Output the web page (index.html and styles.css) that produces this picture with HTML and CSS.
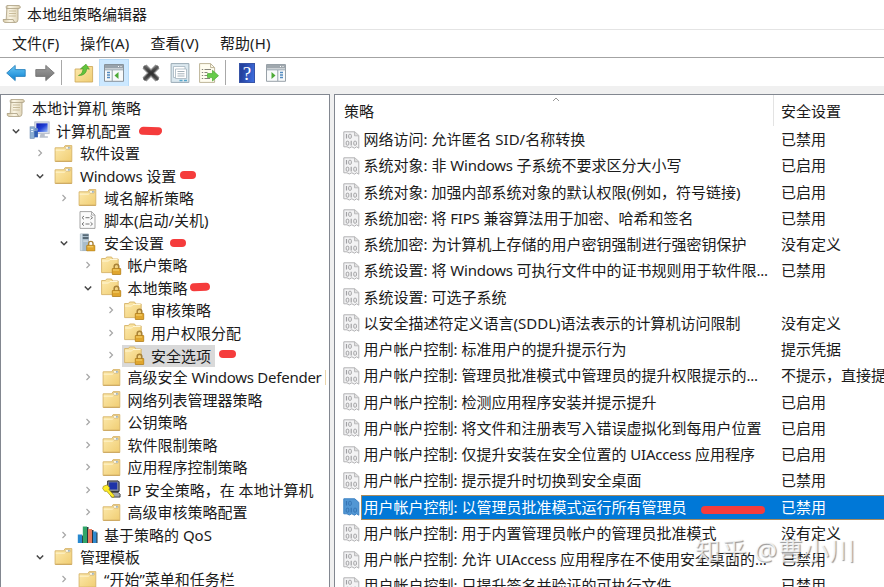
FILE: index.html
```html
<!DOCTYPE html>
<html lang="zh-CN">
<head>
  <meta charset="utf-8">
  <title>本地组策略编辑器</title>
  <link rel="stylesheet" href="styles.css">
</head>
<body>
  <svg class="defs" width="0" height="0">
    <defs>
      <linearGradient id="gold" x1="0" y1="0" x2="1" y2="1"><stop offset="0" stop-color="#fdeaae"/><stop offset="1" stop-color="#f0cd72"/></linearGradient>
      <linearGradient id="paper" x1="0" y1="0" x2="1" y2="0"><stop offset="0" stop-color="#d6c8a4"/><stop offset=".4" stop-color="#fbf6e6"/><stop offset="1" stop-color="#d9ccab"/></linearGradient>
      <linearGradient id="blue" x1="0" y1="0" x2="0" y2="1"><stop offset="0" stop-color="#69c9f7"/><stop offset="1" stop-color="#0b7fd0"/></linearGradient>
      <linearGradient id="gray" x1="0" y1="0" x2="0" y2="1"><stop offset="0" stop-color="#a0a0a0"/><stop offset="1" stop-color="#707070"/></linearGradient>
      <linearGradient id="dark" x1="0" y1="0" x2="0" y2="1"><stop offset="0" stop-color="#6e6e6e"/><stop offset=".5" stop-color="#2d2d2d"/><stop offset="1" stop-color="#5a5a5a"/></linearGradient>
      <linearGradient id="screen" x1="0" y1="0" x2="1" y2="1"><stop offset="0" stop-color="#0a18a4"/><stop offset=".5" stop-color="#1f3ed6"/><stop offset="1" stop-color="#9ebff9"/></linearGradient>
      <symbol id="chev-right" viewBox="0 0 10 10"><path d="M3.500 2l3 3-3 3" fill="none" stroke="#a6a6a6" stroke-width="1.200"/></symbol>
      <symbol id="chev-down" viewBox="0 0 10 10"><path d="M1.800 3.500L5 6.700l3.200-3.200" fill="none" stroke="#444" stroke-width="1.500"/></symbol>
      <symbol id="scroll" viewBox="0 0 20 20">
        <path d="M5 1.500h12q1.800.5 1.200 2.500l-2.200.6v11q0 2.800-2.500 2.900H3Q.7 18 1.200 15.500h3z" fill="url(#paper)" stroke="#b3a88c" stroke-width=".9"/>
        <path d="M1.200 15.500h10q.2 2.800 2.500 2.900M5 1.500q-1.500 1-.6 3h12" fill="none" stroke="#b3a88c" stroke-width=".9"/>
        <path d="M7 7h7M7 9.500h7M6.800 12h7" stroke="#c3b693" stroke-width=".9"/>
      </symbol>
      <symbol id="folder" viewBox="0 0 18 17">
        <path d="M.6 2.800h8.600l1.400-2.200h6.700v15.800H.6z" fill="url(#gold)" stroke="#d6b368" stroke-width=".9"/>
        <path d="M1.200 5.200h9l1.400-1.500" fill="none" stroke="#fff6d2" stroke-width=".9"/>
        <rect x="10.800" y="1.600" width="5" height="2.600" rx=".6" fill="#fffdf0" stroke="#c9a65c" stroke-width=".6"/><path d="M13.500 2.900h1.800" stroke="#7f9fb8" stroke-width="1.100"/>
        <path d="M1 16.300h16.300" stroke="#c5a05a" stroke-width=".8"/>
      </symbol>
      <symbol id="lock" viewBox="0 0 10 12">
        <path d="M2.700 6V3.600a2.300 2.300 0 0 1 4.600 0V6" fill="none" stroke="#a88238" stroke-width="1.500"/>
        <rect x=".6" y="5.500" width="8.800" height="6" rx=".5" fill="#e0a62e" stroke="#b07d1c" stroke-width=".8"/><path d="M1.500 7h6" stroke="#f8d775"/>
      </symbol>
      <symbol id="folder-lock" viewBox="0 0 21 19">
        <path d="M.6 2.500h4l1-1.500h5l1 2h5.600v13.600H.6z" fill="url(#gold)" stroke="#d6b368" stroke-width=".9"/>
        <path d="M1 5h6.500l1.500-1.500h7.500" fill="none" stroke="#fff6d5" stroke-width="1"/>
        <use href="#lock" x="10.500" y="7" width="10" height="12"/>
      </symbol>
      <symbol id="computer" viewBox="0 0 20 18">
        <rect x="5.500" y=".8" width="13.700" height="11.200" fill="#dadfe9" stroke="#b1b8c6" stroke-width=".8"/><rect x="7" y="2.200" width="10.700" height="8.200" fill="url(#screen)"/>
        <path d="M11 12h4v2.500h3V16H10z" fill="#b9c0cb"/>
        <rect x="1" y="5.500" width="4" height="11" fill="#8db0d4" stroke="#6e8bb0" stroke-width=".6"/><path d="M2 8h2M2 10h2" stroke="#eaf3ff"/><path d="M5 9.500h3.500v6H5z" fill="#315fb3"/><circle cx="7" cy="8" r="1.700" fill="#6c8ec9"/>
      </symbol>
      <symbol id="script" viewBox="0 0 17 18">
        <path d="M1 .6h11.500l3.500 3.500v13.300H1z" fill="#fbfbfb" stroke="#9b9b9b" stroke-width=".9"/><path d="M12.500.6v3.500H16" fill="none" stroke="#9b9b9b" stroke-width=".8"/>
        <path d="M5 5L3 6.700l2 1.700M11.500 5l2 1.700-2 1.700M6.500 6.700h4M5 11.300L3 13l2 1.700M11.500 11.300l2 1.700-2 1.700M6.500 13h4" fill="none" stroke="#666" stroke-width=".9"/>
      </symbol>
      <symbol id="server-lock" viewBox="0 0 18 20">
        <path d="M1.500 1H10v17.500H1.500z" fill="#a9bdcb" stroke="#8fa2b0" stroke-width=".7"/><path d="M1.500 1h2v17.500h-2z" fill="#d0dde7"/><path d="M4 2.300h6M4 5.300h6" stroke="#3d4d59" stroke-width="1.400"/><path d="M4.500 8.500h5" stroke="#e2ebf1"/>
        <use href="#lock" x="7.500" y="7.500" width="10" height="12"/>
      </symbol>
      <symbol id="ipsec" viewBox="0 0 20 20">
        <path d="M6 1h11l1 1v10H6z" fill="#8b91a0" stroke="#222" stroke-width="1"/><rect x="7.500" y="2.500" width="8.500" height="7.500" fill="#1d32a8"/>
        <path d="M8 13h9l2 2v3H10z" fill="#a4a7b0" stroke="#333" stroke-width=".9"/>
        <path d="M1.500 6.500l4-1.300 2.500 3-.6 2 5.400 6-.2 2-2.200-.2-5.500-6.200-2 .2-2.200-3z" fill="#ffed28" stroke="#988916" stroke-width=".7"/>
      </symbol>
      <symbol id="qos" viewBox="0 0 21 19">
        <path d="M4.500 10.500h2V18h-2zM9.500 2h2v16h-2zM14.500 5h2v13h-2zM19 7.500h1.500V18H19z" fill="#29343c"/>
        <path d="M.8 9.500h4.200V18H.8z" fill="#2788cf"/><path d="M5.800 1.500H10V18H5.800z" fill="#31a568"/><path d="M11 4h4v14h-4z" fill="#e57b60"/><path d="M16 6.500h3.500V18H16z" fill="#2f89cf"/>
      </symbol>
      <symbol id="binary" viewBox="0 0 17 18">
        <path d="M.8.8h11l4 3.600v12.800l-2.300-1.400-2 1.400-2.700-1.400-2.500 1.200-2.300-1.200H.8z" fill="#f3f3f4" stroke="#b2b2b4" stroke-width="1"/><path d="M11.500.8v4h4" fill="#ddd" stroke="#b2b2b4" stroke-width=".8"/>
        <path d="M3.500 3v4.500M8.200 9.800v4.800" stroke="#a0a0a3" stroke-width="1.200"/>
        <rect x="5.700" y="3.300" width="2.600" height="4" rx="1" fill="none" stroke="#a0a0a3"/><rect x="3.200" y="10.200" width="2.600" height="4" rx="1" fill="none" stroke="#a0a0a3"/><rect x="10.800" y="10.200" width="2.600" height="4" rx="1" fill="none" stroke="#a0a0a3"/>
      </symbol>
      <symbol id="binary-blue" viewBox="0 0 17 18">
        <path d="M.8.8h11l4 3.600v12.800l-2.300-1.400-2 1.400-2.700-1.400-2.500 1.200-2.300-1.200H.8z" fill="#5297d4" stroke="#3d82c4"/>
        <path d="M3.500 3v4.500M8.200 9.800v4.800" stroke="#3574b4" stroke-width="1.200"/>
        <rect x="5.700" y="3.300" width="2.600" height="4" rx="1" fill="none" stroke="#3574b4"/><rect x="3.200" y="10.200" width="2.600" height="4" rx="1" fill="none" stroke="#3574b4"/><rect x="10.800" y="10.200" width="2.600" height="4" rx="1" fill="none" stroke="#3574b4"/>
      </symbol>
    </defs>
  </svg>

  <div class="window">
    <header class="titlebar"><svg class="i-scroll"><use href="#scroll"/></svg><span>本地组策略编辑器</span></header>
    <nav class="menubar"><span>文件(F)</span><span>操作(A)</span><span>查看(V)</span><span>帮助(H)</span></nav>
    <div class="toolbar">
      <svg class="tool back" viewBox="0 0 20 18"><path d="M.7 9l8.500-7.600v4.200h10v6.800h-10v4.200z" fill="url(#blue)" stroke="#2a82bd" stroke-width=".9"/></svg>
      <svg class="tool forward" viewBox="0 0 20 18"><path d="M19.300 9l-8.500-7.600v4.200h-10v6.800h10v4.200z" fill="url(#gray)" stroke="#747474" stroke-width=".9"/></svg>
      <i class="sep"></i>
      <svg class="tool up" viewBox="0 0 19 20"><path d="M.6 6h7l1-2.500h9.500V19H.6z" fill="url(#gold)" stroke="#cfac5d" stroke-width=".9"/><path d="M4 12.500q4.500-1.500 4.500-7L6 5.800l5.500-4.600 3.300 5-2.600-.5q-.4 6.800-8.200 6.800z" fill="#62c43c" stroke="#4a9f2c" stroke-width=".7"/></svg>
      <span class="pressed"><svg class="tool" viewBox="0 0 20 18"><path d="M.5.5h19v16.800H.5z" fill="#f8fafb" stroke="#87929b"/><path d="M1 1h18v3.500H1z" fill="#98a2ab"/><path d="M14 2.500h1M16.500 2.500h1" stroke="#fff"/><path d="M1 5.800h18M8.200 6v11" stroke="#93a0aa"/><path d="M3 8.500h3M3 11h3M3 13.500h3" stroke="#538ac0" stroke-width="1.400"/><path d="M14.500 8v7L10.500 11.500z" fill="#4daa37"/></svg></span>
      <svg class="tool delete" viewBox="0 0 20 20"><path d="M3.500 3.500l13 13M16.500 3.500l-13 13" fill="none" stroke="#8b8b8b" stroke-width="5.600"/><path d="M1.900 3.900L4 1.900l6 5.800 6-5.800 2.100 2L12.300 10l5.800 6.100-2.100 2-6-5.800-6 5.800-2.100-2L7.700 10z" fill="url(#dark)"/></svg>
      <svg class="tool props" viewBox="0 0 19 20"><path d="M.6.6h17.800v18.800H.6z" fill="#dbe8ef" stroke="#9aabb6"/><path d="M3 3.500h11.500v11H3z" fill="#fff" stroke="#a4b4be" stroke-width=".8"/><path d="M5 6h11v9.500H5z" fill="#fff" stroke="#a4b4be" stroke-width=".8"/><path d="M7 8.500h7M7 10.800h7M7 13h7" stroke="#a4b1b9"/><path d="M9 17.500h3M13.500 17.500h3" stroke="#57a6cb" stroke-width="1.500"/></svg>
      <svg class="tool export" viewBox="0 0 20 20"><path d="M.6.600h11l4 4v14.800H.6z" fill="#fffdf0" stroke="#bdb498"/><path d="M11.600.6v4h4" fill="none" stroke="#bdb498"/><path d="M2.800 6.500h1.400M5.500 6.500h6.500M2.800 9.500h1.400M5.500 9.500h3M2.800 12.500h1.400M5.500 12.500h3M2.800 15.500h1.400M5.500 15.500h5.500" stroke="#86857b"/><path d="M8.500 10.600h5V7.300l6 5.400-6 5.300v-3.400h-5z" fill="#66cc4a" stroke="#4aa834" stroke-width=".7"/></svg>
      <i class="sep second"></i>
      <span class="help">?</span>
      <svg class="tool action" viewBox="0 0 20 18"><path d="M.5.5h19v16.800H.5z" fill="#f8fafb" stroke="#98a1a8"/><path d="M1 1h18v3.500H1z" fill="#a0a8ae"/><path d="M14 2.500h1M16.500 2.500h1" stroke="#fff"/><path d="M1 5.800h18M11.800 6v11" stroke="#93a0aa"/><path d="M14 8.500h3M14 11h3M14 13.500h3" stroke="#538ac0" stroke-width="1.400"/><path d="M5.500 8v7l4-3.500z" fill="#4daa37"/></svg>
    </div>

    <main class="panes">
      <section class="tree">
        <div class="node root"><svg class="i-scroll"><use href="#scroll"/></svg><span class="label">本地计算机 策略</span></div>
        <div class="node l1"><svg class="chev"><use href="#chev-down"/></svg><svg class="icon"><use href="#computer"/></svg><span class="label">计算机配置</span><i class="mark m1"></i></div>
        <div class="node l2"><svg class="chev"><use href="#chev-right"/></svg><svg class="icon folder"><use href="#folder"/></svg><span class="label">软件设置</span></div>
        <div class="node l2"><svg class="chev"><use href="#chev-down"/></svg><svg class="icon folder"><use href="#folder"/></svg><span class="label"><span class="en">Windows</span> 设置</span><i class="mark m2"></i></div>
        <div class="node l3"><svg class="chev"><use href="#chev-right"/></svg><svg class="icon folder"><use href="#folder"/></svg><span class="label">域名解析策略</span></div>
        <div class="node l3"><i class="chev"></i><svg class="icon script"><use href="#script"/></svg><span class="label">脚本(启动/关机)</span></div>
        <div class="node l3"><svg class="chev"><use href="#chev-down"/></svg><svg class="icon"><use href="#server-lock"/></svg><span class="label">安全设置</span><i class="mark m3"></i></div>
        <div class="node l4"><svg class="chev"><use href="#chev-right"/></svg><svg class="icon"><use href="#folder-lock"/></svg><span class="label">帐户策略</span></div>
        <div class="node l4"><svg class="chev"><use href="#chev-down"/></svg><svg class="icon"><use href="#folder-lock"/></svg><span class="label">本地策略</span><i class="mark m4"></i></div>
        <div class="node l5"><svg class="chev"><use href="#chev-right"/></svg><svg class="icon"><use href="#folder-lock"/></svg><span class="label">审核策略</span></div>
        <div class="node l5"><svg class="chev"><use href="#chev-right"/></svg><svg class="icon"><use href="#folder-lock"/></svg><span class="label">用户权限分配</span></div>
        <div class="node l5"><svg class="chev"><use href="#chev-right"/></svg><span class="current"><svg class="icon"><use href="#folder-lock"/></svg><span class="label">安全选项</span></span><i class="mark m5"></i></div>
        <div class="node l4"><svg class="chev"><use href="#chev-right"/></svg><svg class="icon folder"><use href="#folder"/></svg><span class="label">高级安全 <span class="en">Windows Defender</span></span><i class="cut"></i></div>
        <div class="node l4"><i class="chev"></i><svg class="icon folder"><use href="#folder"/></svg><span class="label">网络列表管理器策略</span></div>
        <div class="node l4"><svg class="chev"><use href="#chev-right"/></svg><svg class="icon folder"><use href="#folder"/></svg><span class="label">公钥策略</span></div>
        <div class="node l4"><svg class="chev"><use href="#chev-right"/></svg><svg class="icon folder"><use href="#folder"/></svg><span class="label">软件限制策略</span></div>
        <div class="node l4"><svg class="chev"><use href="#chev-right"/></svg><svg class="icon folder"><use href="#folder"/></svg><span class="label">应用程序控制策略</span></div>
        <div class="node l4"><svg class="chev"><use href="#chev-right"/></svg><svg class="icon"><use href="#ipsec"/></svg><span class="label"><span class="en">IP </span>安全策略，在<span class="en"> </span>本地计算机</span></div>
        <div class="node l4"><svg class="chev"><use href="#chev-right"/></svg><svg class="icon folder"><use href="#folder"/></svg><span class="label">高级审核策略配置</span></div>
        <div class="node l3"><svg class="chev"><use href="#chev-right"/></svg><svg class="icon"><use href="#qos"/></svg><span class="label">基于策略的 QoS</span></div>
        <div class="node l2"><svg class="chev"><use href="#chev-down"/></svg><svg class="icon folder"><use href="#folder"/></svg><span class="label">管理模板</span></div>
        <div class="node l3"><svg class="chev"><use href="#chev-right"/></svg><svg class="icon folder"><use href="#folder"/></svg><span class="label">“开始”菜单和任务栏</span></div>
      </section>

      <section class="list">
        <div class="head"><span class="col-name">策略</span><svg class="sort" viewBox="0 0 8 5"><path d="M1 4l3-3 3 3" fill="none" stroke="#999"/></svg><span class="col-set">安全设置</span></div>
        <div class="row"><svg><use href="#binary"/></svg><div class="cells"><p>网络访问: 允许匿名 SID/名称转换</p><b>已禁用</b></div></div>
        <div class="row"><svg><use href="#binary"/></svg><div class="cells"><p>系统对象: 非 <span class="en">Windows</span> 子系统不要求区分大小写</p><b>已启用</b></div></div>
        <div class="row"><svg><use href="#binary"/></svg><div class="cells"><p>系统对象: 加强内部系统对象的默认权限(例如，符号链接)</p><b>已启用</b></div></div>
        <div class="row"><svg><use href="#binary"/></svg><div class="cells"><p>系统加密: 将 <span class="en">FIPS</span> 兼容算法用于加密、哈希和签名</p><b>已禁用</b></div></div>
        <div class="row"><svg><use href="#binary"/></svg><div class="cells"><p>系统加密: 为计算机上存储的用户密钥强制进行强密钥保护</p><b>没有定义</b></div></div>
        <div class="row"><svg><use href="#binary"/></svg><div class="cells"><p>系统设置: 将 <span class="en">Windows</span> 可执行文件中的证书规则用于软件限<span class="en">...</span></p><b>已禁用</b></div></div>
        <div class="row"><svg><use href="#binary"/></svg><div class="cells"><p>系统设置: 可选子系统</p><b></b></div></div>
        <div class="row"><svg><use href="#binary"/></svg><div class="cells"><p>以安全描述符定义语言(SDDL)语法表示的计算机访问限制</p><b>没有定义</b></div></div>
        <div class="row"><svg><use href="#binary"/></svg><div class="cells"><p>用户帐户控制: 标准用户的提升提示行为</p><b>提示凭据</b></div></div>
        <div class="row"><svg><use href="#binary"/></svg><div class="cells"><p>用户帐户控制: 管理员批准模式中管理员的提升权限提示的<span class="en">...</span></p><b>不提示，直接提</b></div></div>
        <div class="row"><svg><use href="#binary"/></svg><div class="cells"><p>用户帐户控制: 检测应用程序安装并提示提升</p><b>已启用</b></div></div>
        <div class="row"><svg><use href="#binary"/></svg><div class="cells"><p>用户帐户控制: 将文件和注册表写入错误虚拟化到每用户位置</p><b>已启用</b></div></div>
        <div class="row"><svg><use href="#binary"/></svg><div class="cells"><p>用户帐户控制: 仅提升安装在安全位置的 <span class="en">UIAccess</span> 应用程序</p><b>已启用</b></div></div>
        <div class="row"><svg><use href="#binary"/></svg><div class="cells"><p>用户帐户控制: 提示提升时切换到安全桌面</p><b>已禁用</b></div></div>
        <div class="row selected"><svg><use href="#binary-blue"/></svg><div class="cells"><p>用户帐户控制: 以管理员批准模式运行所有管理员<i class="mark m6"></i></p><b>已禁用</b></div></div>
        <div class="row"><svg><use href="#binary"/></svg><div class="cells"><p>用户帐户控制: 用于内置管理员帐户的管理员批准模式</p><b>没有定义</b></div></div>
        <div class="row"><svg><use href="#binary"/></svg><div class="cells"><p>用户帐户控制: 允许 <span class="en">UIAccess</span> 应用程序在不使用安全桌面的<span class="en">...</span></p><b>已禁用</b></div></div>
        <div class="row"><svg><use href="#binary"/></svg><div class="cells"><p>用户帐户控制: 只提升签名并验证的可执行文件</p><b>已禁用</b></div></div>
      </section>
    </main>
    <div class="watermark">知乎 @曹小川</div>
  </div>
</body>
</html>
```
FILE: styles.css
```css
* {
  box-sizing: border-box;
}

body {
  margin: 0;
  font-family: "Noto Sans", "Noto Sans CJK SC", sans-serif;
  font-size: 15px;
  line-height: 22px;
  color: #1b1b1b;
  background: #fff;
}

.defs {
  position: absolute;
}

.window {
  position: relative;
  display: flex;
  flex-direction: column;
  width: 884px;
  height: 587px;
  overflow: hidden;
}

svg {
  display: block;
  flex: none;
}

.en {
  letter-spacing: -.25px;
}

.i-scroll {
  width: 20px;
  height: 20px;
}

.titlebar {
  display: flex;
  align-items: center;
  gap: 5px;
  height: 30px;
  padding: 0 0 1px 2px;
  border-bottom: 1px solid #e4e4e4;
}

.menubar {
  display: flex;
  gap: 21px;
  height: 28px;
  padding: 2px 0 0 12px;
  border-bottom: 1px solid #a3a3a3;
}

.menubar span {
  letter-spacing: .1px;
}

.toolbar {
  display: flex;
  align-items: center;
  height: 28px;
  padding: 1px 0 0 6px;
}

.tool {
  width: 20px;
  height: 18px;
}

.forward {
  margin-left: 9px;
}

.sep {
  width: 1px;
  height: 25px;
  margin: 0 12px 0 6px;
  background: #a8a8a8;
}

.up,
.delete,
.props,
.export {
  height: 20px;
}

.pressed {
  display: flex;
  align-items: center;
  justify-content: center;
  width: 30px;
  height: 28px;
  margin-left: 5px;
  background: #cce8ff;
  border: 1px solid #b9dcf8;
}

.delete {
  margin-left: 12px;
}

.props,
.export {
  margin-left: 9px;
}

.second {
  margin: 0 13px 0 6px;
}

.help {
  width: 16px;
  height: 20px;
  font: 19px/19px "Liberation Serif", serif;
  text-align: center;
  color: #fff;
  background: linear-gradient(100deg, #24419f 20%, #3f6fe0);
  border: 1px solid #3753a6;
}

.action {
  margin-left: 11px;
}

.panes {
  display: flex;
  gap: 4px;
  height: 501px;
  padding-top: 8px;
  background: #f0f0f0;
}

.tree {
  width: 330px;
  height: 493px;
  padding-top: 2px;
  overflow: hidden;
  background: #fff;
  border: solid #828790;
  border-width: 1px 1px 0;
}

.node {
  display: flex;
  align-items: center;
  height: 22.45px;
  white-space: nowrap;
}

.root {
  gap: 6px;
  padding-left: 5px;
}

.l1 { padding-left: 10px; }
.l2 { padding-left: 34px; }
.l3 { padding-left: 58px; }
.l4 { padding-left: 81.500px; }
.l5 { padding-left: 105px; }

.chev {
  flex: none;
  width: 10px;
  height: 10px;
  margin-right: 8px;
}

.icon {
  width: 21px;
  height: 19px;
  margin-right: 6px;
}

.folder {
  height: 17px;
}

.script {
  height: 18px;
}

.current {
  display: flex;
  align-items: center;
  height: 22px;
  margin: 1px 0 0 -2px;
  padding: 0 4px 0 2px;
  background: #d9d9d9;
}

.cut {
  flex: none;
  width: 1px;
  height: 15px;
  margin-left: 3px;
  background: #ecd6ac;
}

.mark {
  flex: none;
  width: 19px;
  height: 8px;
  border-radius: 4px;
  background: #f53c3c;
}

.m1 { width: 23px; margin-left: 8px; border-radius: 5px 4px 5px 4px; transform: rotate(2deg); }
.m2 { width: 16px; margin: 0 0 2px 4px; }
.m3 { width: 16px; margin-left: 6px; }
.m4 { width: 20px; margin: 0 0 2px 2px; transform: rotate(-3deg); }
.m5 { width: 17px; margin: 0 0 3px 4px; }

.list {
  flex: 1;
  height: 493px;
  overflow: hidden;
  background: #fff;
  border: solid #828790;
  border-width: 1px 0 0 1px;
}

.head {
  display: flex;
  height: 31.4px;
  padding-left: 9px;
  line-height: 33px;
}

.col-name {
  width: 208px;
}

.sort {
  width: 8px;
  height: 5px;
  margin-top: 2px;
}

.col-set {
  flex: 1;
  margin-left: 213px;
  padding-left: 7px;
  border-left: 1px solid #e3e3e3;
}

.row {
  display: flex;
  align-items: center;
  height: 26.25px;
  padding-left: 8px;
}

.row svg {
  width: 17px;
  height: 18px;
}

.cells {
  display: flex;
  flex: 1;
  height: 25px;
  margin-left: 1px;
  padding-left: 2.5px;
  line-height: 25px;
  white-space: nowrap;
}

.cells p {
  flex: none;
  width: 417.5px;
  margin: 0;
}

.cells b {
  font-weight: normal;
}

.selected .cells {
  padding-left: 1.5px;
  color: #fff;
  background: #0078d7;
  border: 1px solid #a88a5e;
  border-right: 0;
  line-height: 23px;
}

.m6 {
  display: inline-block;
  width: 64px;
  margin-left: 15px;
  vertical-align: -1px;
}

.watermark {
  position: absolute;
  left: 695px;
  top: 533px;
  font-size: 25.5px;
  line-height: 34px;
  letter-spacing: .5px;
  white-space: nowrap;
  color: rgba(255, 255, 255, .75);
  text-shadow: 1px 1px 1px rgba(90, 90, 90, .65);
}
```
